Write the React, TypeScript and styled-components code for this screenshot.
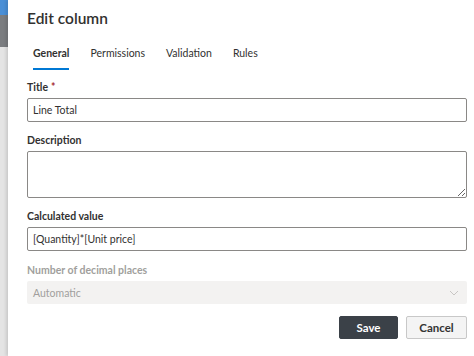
import React from "react";
import styled, { createGlobalStyle } from "styled-components";

const Global = createGlobalStyle`
  html, body { margin: 0; padding: 0; background: #ffffff; }
  body { font-family: "Lato", "Open Sans", sans-serif; color: #323130; }
  * { box-sizing: border-box; }
`;

const Page = styled.div`
  display: flex;
  width: 474px;
  height: 356px;
  overflow: hidden;
`;

const Backdrop = styled.div`
  width: 8px;
  display: flex;
  flex-direction: column;
  flex: none;
`;

const Band = styled.div<{ $h?: number; $c: string }>`
  height: ${(p) => (p.$h ? `${p.$h}px` : "auto")};
  flex: ${(p) => (p.$h ? "none" : "1")};
  background: ${(p) => p.$c};
`;

const Panel = styled.div`
  flex: 1;
  background: #ffffff;
  box-shadow: -2px 0 3px rgba(0, 0, 0, 0.12);
  padding: 8px 7px 0 19px;
  display: flex;
  flex-direction: column;
`;

const Heading = styled.h1`
  margin: 0;
  font-size: 15.5px;
  line-height: 20px;
  font-weight: 600;
  color: #323130;
`;

const Tabs = styled.div`
  display: flex;
  gap: 21px;
  padding-left: 6px;
  margin-top: 18px;
`;

const Tab = styled.div<{ $active?: boolean }>`
  font-size: 10.5px;
  line-height: 14px;
  color: #323130;
  font-weight: ${(p) => (p.$active ? 700 : 400)};
  padding-bottom: 8px;
  border-bottom: 2px solid ${(p) => (p.$active ? "#0078d4" : "transparent")};
`;

const Field = styled.div<{ $top: number }>`
  display: flex;
  flex-direction: column;
  margin-top: ${(p) => p.$top}px;
`;

const Label = styled.label<{ $disabled?: boolean }>`
  font-size: 10.5px;
  line-height: 16px;
  font-weight: 700;
  color: ${(p) => (p.$disabled ? "#a19f9d" : "#323130")};
  margin-bottom: 3px;
`;

const Req = styled.span`
  color: #a4262c;
  margin-left: 3px;
`;

const TextInput = styled.input`
  height: 24px;
  border: 1px solid #8a8886;
  border-radius: 2px;
  padding: 0 5px;
  font: inherit;
  font-size: 10.5px;
  color: #323130;
  outline: none;
  background: #fff;
`;

const TextArea = styled.textarea`
  height: 47px;
  border: 1px solid #8a8886;
  border-radius: 2px;
  padding: 4px 5px;
  font: inherit;
  font-size: 10.5px;
  resize: vertical;
  outline: none;
  display: block;
`;

const Dropdown = styled.div`
  height: 23px;
  background: #f3f2f1;
  border-radius: 2px;
  display: flex;
  align-items: center;
  justify-content: space-between;
  padding: 0 8px 0 6px;
  font-size: 10.5px;
  color: #a19f9d;
`;

const Footer = styled.div`
  display: flex;
  justify-content: flex-end;
  gap: 8px;
  margin-top: 12px;
`;

const Button = styled.button<{ $primary?: boolean }>`
  height: 23px;
  width: ${(p) => (p.$primary ? 59 : 61)}px;
  border-radius: 2px;
  font-family: "Lato", "Open Sans", sans-serif;
  font-weight: 700;
  font-size: 11.5px;
  background: ${(p) => (p.$primary ? "#3b4148" : "#f4f4f4")};
  color: ${(p) => (p.$primary ? "#ffffff" : "#333333")};
  border: 1px solid ${(p) => (p.$primary ? "#3b4148" : "#c8c8c8")};
  padding: 0;
`;

export default function App() {
  return (
    <Page>
      <Global />
      <Backdrop>
        <Band $h={15} $c="#4a8fd6" />
        <Band $h={32} $c="#7b7d80" />
        <Band $c="#e4e4e4" />
      </Backdrop>
      <Panel>
        <Heading>Edit column</Heading>
        <Tabs>
          <Tab $active>General</Tab>
          <Tab>Permissions</Tab>
          <Tab>Validation</Tab>
          <Tab>Rules</Tab>
        </Tabs>
        <Field $top={9}>
          <Label>
            Title<Req>*</Req>
          </Label>
          <TextInput defaultValue="Line Total" />
        </Field>
        <Field $top={10}>
          <Label>Description</Label>
          <TextArea />
        </Field>
        <Field $top={10}>
          <Label>Calculated value</Label>
          <TextInput defaultValue="[Quantity]*[Unit price]" />
        </Field>
        <Field $top={11}>
          <Label $disabled>Number of decimal places</Label>
          <Dropdown>
            <span>Automatic</span>
            <svg width="10" height="6" viewBox="0 0 10 6">
              <path d="M1 1l4 4 4-4" fill="none" stroke="#c8c6c4" strokeWidth="1" />
            </svg>
          </Dropdown>
        </Field>
        <Footer>
          <Button $primary>Save</Button>
          <Button>Cancel</Button>
        </Footer>
      </Panel>
    </Page>
  );
}
